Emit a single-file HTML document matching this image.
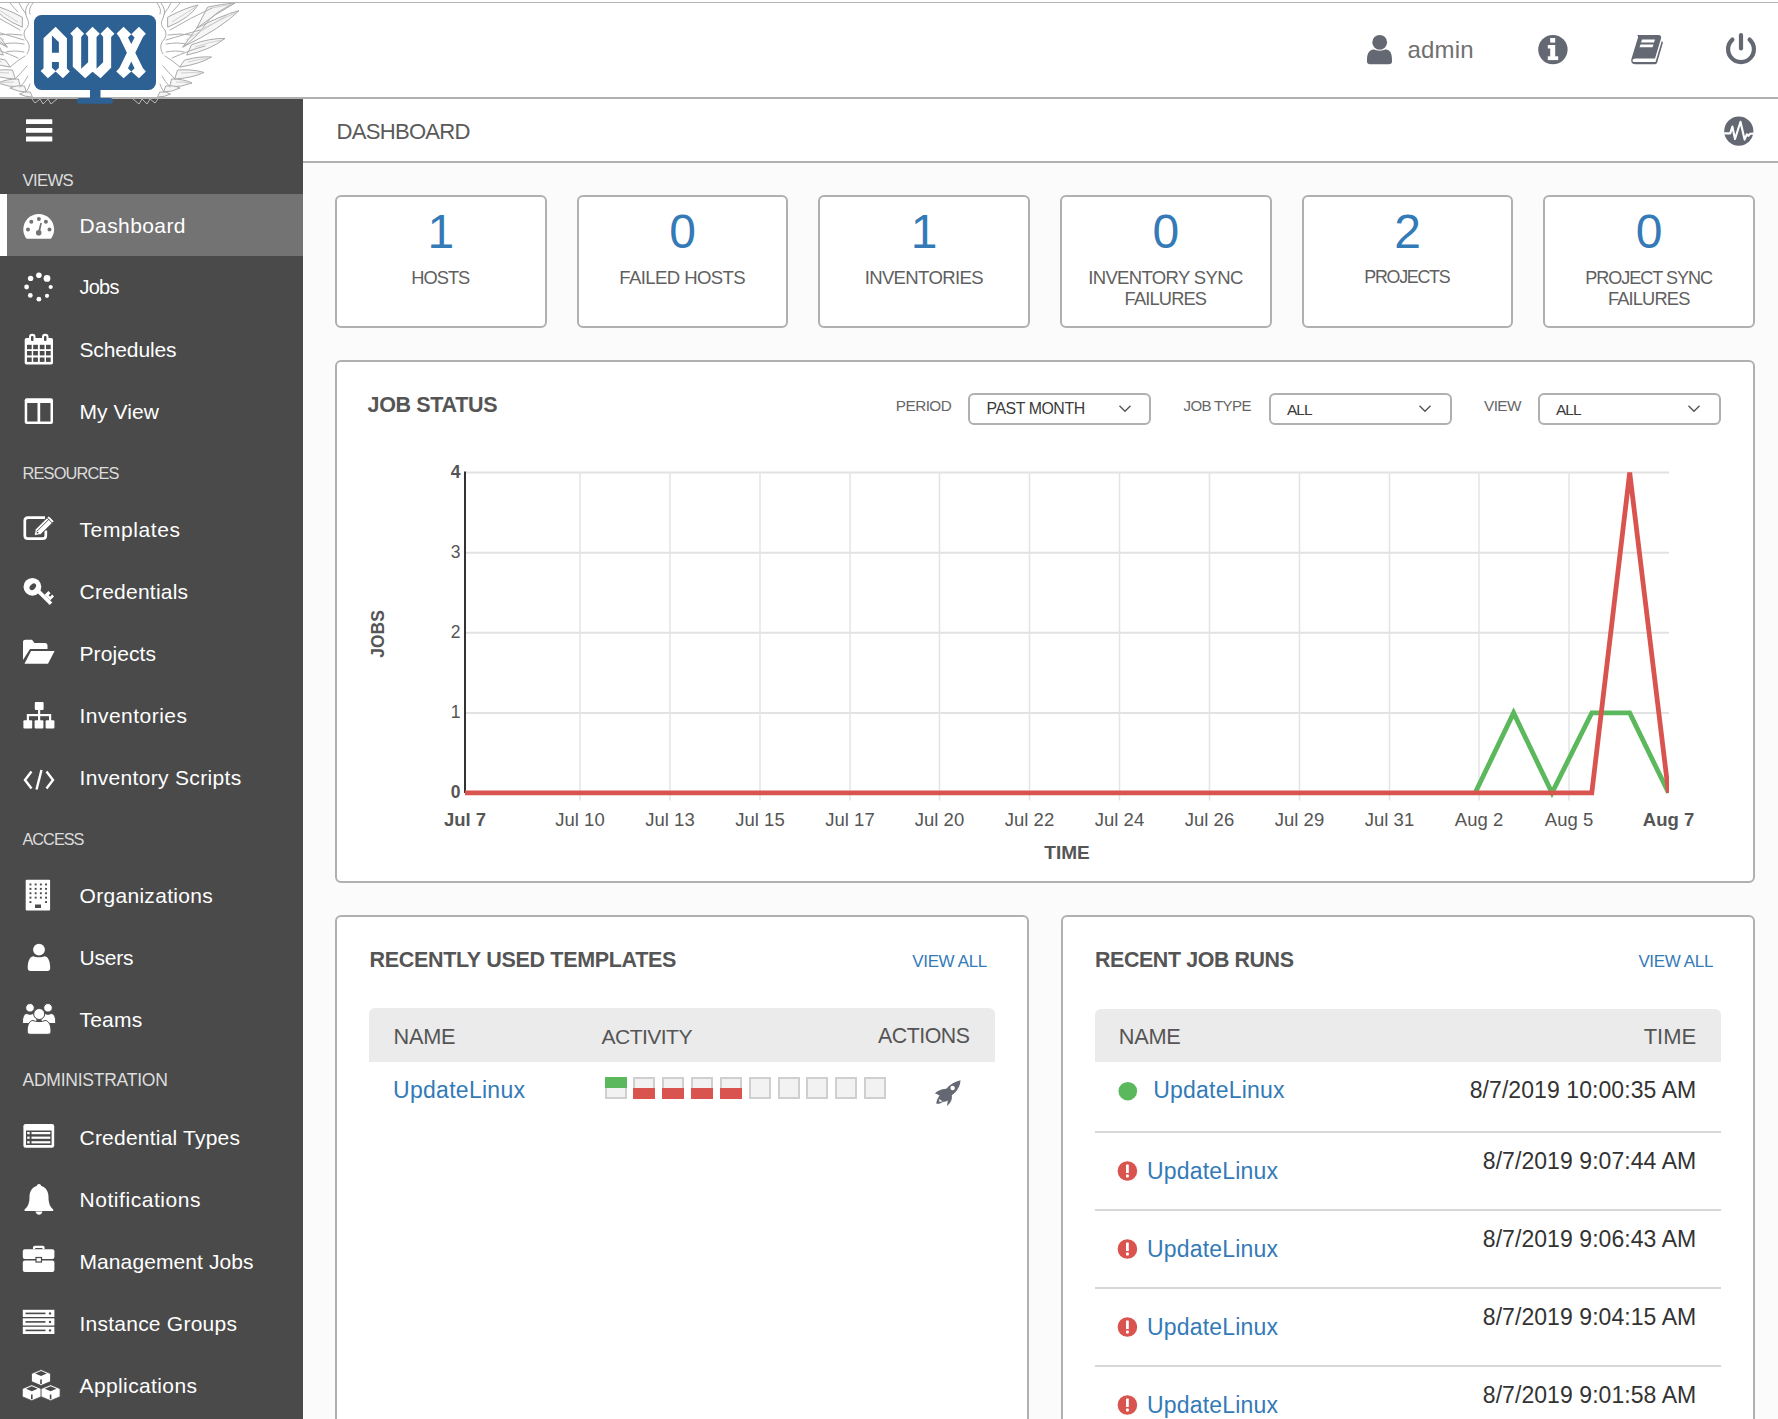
<!DOCTYPE html>
<html><head><meta charset="utf-8"><title>AWX Dashboard</title>
<style>
html,body{margin:0;padding:0;width:1778px;height:1419px;overflow:hidden;background:#fff;}
body{position:relative;font-family:"Liberation Sans",sans-serif;}
.t{position:absolute;white-space:nowrap;line-height:1;}
svg{display:block;}
</style></head><body>
<div style="position:absolute;left:0px;top:0px;width:1778px;height:1419px;background:#fff;"></div>
<div style="position:absolute;left:303px;top:163px;width:1475px;height:1256px;background:#fbfbfb;"></div>
<div style="position:absolute;left:0px;top:2px;width:1778px;height:1px;background:#b4b4b4;"></div>
<div style="position:absolute;left:0px;top:97px;width:1778px;height:2px;background:#b0b0b0;"></div>
<div style="position:absolute;left:303px;top:161px;width:1475px;height:2px;background:#b0b0b0;"></div>
<div style="position:absolute;left:0px;top:99px;width:303px;height:1320px;background:#4a4a4a;"></div>
<div style="position:absolute;left:7px;top:194px;width:296px;height:62px;background:#737373;"></div>
<div style="position:absolute;left:0px;top:194px;width:7px;height:62px;background:#fff;"></div>
<svg style="position:absolute;left:0;top:0" width="260" height="110" viewBox="0 0 260 110">
<clipPath id="wc"><rect x="0" y="3" width="260" height="107"/></clipPath><rect x="0" y="99" width="260" height="11" fill="#4a4a4a"/>
<g clip-path="url(#wc)">

<g fill="#f6f6f6" stroke="#a9a9a9" stroke-width="1" stroke-linecap="round" stroke-linejoin="round">
<path d="M197,28 Q220,16 239,10.6 Q222,28 183,47 Z"/>
<path d="M208,7 Q222,4 235,3 Q215,14 197,28 Z"/>
<path d="M168,17 Q185,8 198,5 Q190,18 168,27 Z"/>
<path d="M192,44.5 Q210,38 225,38.5 Q210,50 187,55 Z"/>
<path d="M185,60 Q200,56 211.6,57 Q200,64 180,67 Z"/>
<path d="M178,70 Q193,69 204,72.5 Q192,78 175,79 Z"/>
<path d="M172,79 Q184,79 192,83 Q182,87 170,87 Z"/>
<path d="M166,86 Q174,85 180,88 Q172,92 164,92 Z"/>
<path d="M160,92 Q166,91 170.5,94 Q165,97 158,97 Z"/>
</g>
<g fill="none" stroke="#adadad" stroke-width="1" stroke-linecap="round">
<path d="M183,47 Q198,36 205,25 Q214,12 235,3"/>
<path d="M168,35 Q180,33 192,35 M166,44 Q178,42 186,44 M166,52 Q176,50 184,52"/>
<path d="M161,3 Q167,10 163,18 Q159,25 165,30 Q168,36 162,42 Q159,48 163,54"/>
<path d="M157,3 Q162,9 160,14 M171,3 Q168,9 164,14 M180,3 Q176,8 172,12"/>
<path d="M180,67 Q172,60 165,56 M175,79 Q168,72 163,66 M170,87 Q165,82 162,76 M164,92 Q161,88 160,84"/>
<path d="M170,30 Q190,18 212,8 M166,40 Q186,34 200,30 M172,58 Q190,50 205,46"/>
<path d="M133,99 L139,104 L142,99 L147,104 L150,99 L155,103 L158,99" stroke="#b9b9b9"/>
</g>
<g fill="none" stroke="#c9c9c9" stroke-width="0.9">
<path d="M200,30 Q220,20 236,12.5"/>
<path d="M172,22 Q188,12 197,6"/>
<path d="M195,47 Q210,42 222,40"/>
<path d="M188,62 Q200,59 209,58"/>
<path d="M181,73 Q193,72 201,73"/>
<path d="M176,82 Q185,82 190,83"/>
<path d="M186,40 Q210,26 232,12"/>
<path d="M212,8 Q222,6 232,4"/>
</g>
<g transform="translate(190,0) scale(-1,1)">
<g fill="#f6f6f6" stroke="#a9a9a9" stroke-width="1" stroke-linecap="round" stroke-linejoin="round">
<path d="M197,28 Q220,16 239,10.6 Q222,28 183,47 Z"/>
<path d="M208,7 Q222,4 235,3 Q215,14 197,28 Z"/>
<path d="M168,17 Q185,8 198,5 Q190,18 168,27 Z"/>
<path d="M192,44.5 Q210,38 225,38.5 Q210,50 187,55 Z"/>
<path d="M185,60 Q200,56 211.6,57 Q200,64 180,67 Z"/>
<path d="M178,70 Q193,69 204,72.5 Q192,78 175,79 Z"/>
<path d="M172,79 Q184,79 192,83 Q182,87 170,87 Z"/>
<path d="M166,86 Q174,85 180,88 Q172,92 164,92 Z"/>
<path d="M160,92 Q166,91 170.5,94 Q165,97 158,97 Z"/>
</g>
<g fill="none" stroke="#adadad" stroke-width="1" stroke-linecap="round">
<path d="M183,47 Q198,36 205,25 Q214,12 235,3"/>
<path d="M168,35 Q180,33 192,35 M166,44 Q178,42 186,44 M166,52 Q176,50 184,52"/>
<path d="M161,3 Q167,10 163,18 Q159,25 165,30 Q168,36 162,42 Q159,48 163,54"/>
<path d="M157,3 Q162,9 160,14 M171,3 Q168,9 164,14 M180,3 Q176,8 172,12"/>
<path d="M180,67 Q172,60 165,56 M175,79 Q168,72 163,66 M170,87 Q165,82 162,76 M164,92 Q161,88 160,84"/>
<path d="M170,30 Q190,18 212,8 M166,40 Q186,34 200,30 M172,58 Q190,50 205,46"/>
<path d="M133,99 L139,104 L142,99 L147,104 L150,99 L155,103 L158,99" stroke="#b9b9b9"/>
</g>
<g fill="none" stroke="#c9c9c9" stroke-width="0.9">
<path d="M200,30 Q220,20 236,12.5"/>
<path d="M172,22 Q188,12 197,6"/>
<path d="M195,47 Q210,42 222,40"/>
<path d="M188,62 Q200,59 209,58"/>
<path d="M181,73 Q193,72 201,73"/>
<path d="M176,82 Q185,82 190,83"/>
<path d="M186,40 Q210,26 232,12"/>
<path d="M212,8 Q222,6 232,4"/>
</g></g>
</g>
<rect x="34" y="15" width="122" height="75" rx="7.5" fill="#2d6093"/>
<rect x="90" y="88" width="10.5" height="12" fill="#2d6093"/>
<rect x="77" y="98" width="36" height="5.8" rx="2.9" fill="#2d6093"/>
<g transform="translate(30,10) scale(0.07312)" fill="#fff" fill-rule="evenodd">
<path d="M185,385 L350,230 L505,385 L505,800 L545,840 L450,935 L350,840 L245,935 L145,835 L185,795 Z M300,350 L395,440 L395,585 L300,585 Z M300,710 L395,710 L395,790 L350,835 L300,790 Z"/>
<path d="M550,320 L645,230 L740,325 L700,368 L700,805 L795,715 L795,365 L760,325 L855,230 L955,325 L910,368 L910,805 L1000,715 L1000,365 L965,325 L1060,230 L1155,325 L1110,370 L1110,790 L965,935 L855,845 L755,935 L585,775 L585,360 Z"/>
<path d="M1185,320 L1280,230 L1385,330 L1490,230 L1585,325 L1545,370 L1440,585 L1545,795 L1585,840 L1490,935 L1385,840 L1280,935 L1180,840 L1225,790 L1325,585 L1225,375 Z M1340,375 L1385,330 L1430,375 L1385,465 Z M1340,795 L1385,705 L1430,795 L1385,840 Z"/>
</g>
</svg>
<svg style="position:absolute;left:0;top:0" width="1778" height="170" viewBox="0 0 1778 170">
<g fill="#646873">
<circle cx="1379.7" cy="42.3" r="7.4"/>
<path d="M1367,60 C1367,52 1370,49.5 1374.5,49.5 C1376.5,51 1383,51 1385,49.5 C1389.5,49.5 1392,52 1392,60 L1392,61.5 C1392,63.2 1390.8,64.2 1389,64.2 L1370,64.2 C1368.2,64.2 1367,63.2 1367,61.5 Z"/>
<circle cx="1552.9" cy="49.6" r="14.7"/>
<path d="M1636.5,35 L1658.5,35 C1660.7,35 1661.5,36.5 1661,38.5 L1655,58.5 L1636,58.5 C1633.2,58.5 1632.5,59.5 1632.5,60.5 C1632.5,62 1633.5,62 1635,62 L1655.5,62 L1661.8,41 L1663,42.5 L1657,63 C1656.5,64 1655.5,64.2 1654.5,64.2 L1635,64.2 C1632,64.2 1630.8,62 1631.4,59 L1638,37.5 C1638.5,35.8 1637,35 1636.5,35 Z"/>
<circle cx="1738.8" cy="131.1" r="14.6"/>
</g>
<g fill="#fff">
<rect x="1550.2" y="38" width="5" height="4.6"/>
<rect x="1550.2" y="45" width="5" height="12"/>
<rect x="1547.8" y="45" width="4" height="3.5"/>
<rect x="1547.8" y="56.3" width="10.4" height="3.8"/>
<path d="M1642,39.5 L1655,39.5 L1654,42.5 L1641,42.5 Z M1640.5,44.5 L1653.5,44.5 L1652.5,47.2 L1639.5,47.2 Z"/>
</g>
<g fill="none" stroke="#646873" stroke-width="4.2" stroke-linecap="round">
<path d="M1732.4,39.6 A12.9,12.9 0 1 0 1749.6,39.6"/>
<line x1="1741" y1="35" x2="1741" y2="48.5"/>
</g>
<clipPath id="pc"><circle cx="1738.8" cy="131.1" r="14.8"/></clipPath><polyline clip-path="url(#pc)" points="1722,133.4 1730.2,133.4 1732.4,126.6 1735,139 1740.5,121.8 1744.6,139.6 1746.8,134.3 1748.5,135.8 1750.2,133.8 1756,133.6" fill="none" stroke="#fff" stroke-width="2.1" stroke-linejoin="round"/>
</svg>
<div class="t" style="left:1407.50px;top:38.48px;font-size:24px;color:#707070;letter-spacing:0.159px;">admin</div>
<svg style="position:absolute;left:0;top:0" width="303" height="1419" viewBox="0 0 303 1419">
<g fill="#fff">
<rect x="26" y="119.2" width="26.3" height="4.9" rx="0.5"/>
<rect x="26" y="127.9" width="26.3" height="4.9" rx="0.5"/>
<rect x="26" y="136.5" width="26.3" height="4.9" rx="0.5"/>
</g>
</svg>
<svg style="position:absolute;left:0;top:0" width="303" height="1419" viewBox="0 0 303 1419"><clipPath id="gclip"><rect x="20" y="210" width="40" height="28.8"/></clipPath>
<circle cx="38.7" cy="229.3" r="15.4" fill="#fff" clip-path="url(#gclip)"/>
<g fill="#737373"><circle cx="28" cy="229.4" r="2"/><circle cx="31.3" cy="221.8" r="2"/><circle cx="38.9" cy="218.9" r="2"/><circle cx="45.9" cy="221.8" r="2"/><circle cx="49.5" cy="229.4" r="2"/>
<circle cx="38.7" cy="232.7" r="2.8"/><path d="M37.8,232.4 L40.4,222.7 L41.9,223.1 L39.8,232.9 Z"/></g><g fill="#fff"><circle cx="38.9" cy="275.2" r="2.8"/><circle cx="47" cy="278.4" r="3.4"/><circle cx="50.7" cy="287" r="2.1"/><circle cx="47" cy="295.8" r="2.1"/><circle cx="38.9" cy="299.2" r="2.4"/><circle cx="30.3" cy="295.4" r="2.4"/><circle cx="26.6" cy="287" r="2.4"/><circle cx="30.6" cy="278.4" r="2.7"/></g><rect x="24.7" y="338" width="28.3" height="26.6" rx="1.8" fill="#fff"/>
<rect x="29" y="333.8" width="6.5" height="8" rx="3" fill="#fff"/><rect x="42" y="333.8" width="6.5" height="8" rx="3" fill="#fff"/>
<rect x="31" y="336" width="2.5" height="5" rx="1" fill="#4a4a4a"/><rect x="44" y="336" width="2.5" height="5" rx="1" fill="#4a4a4a"/>
<g fill="#4a4a4a"><rect x="27" y="344.8" width="4.7" height="4.4"/><rect x="33.2" y="344.8" width="4.7" height="4.4"/><rect x="39.8" y="344.8" width="4.7" height="4.4"/><rect x="46" y="344.8" width="4.7" height="4.4"/><rect x="27" y="351" width="4.7" height="4.4"/><rect x="33.2" y="351" width="4.7" height="4.4"/><rect x="39.8" y="351" width="4.7" height="4.4"/><rect x="46" y="351" width="4.7" height="4.4"/><rect x="27" y="357.5" width="4.7" height="4.4"/><rect x="33.2" y="357.5" width="4.7" height="4.4"/><rect x="39.8" y="357.5" width="4.7" height="4.4"/><rect x="46" y="357.5" width="4.7" height="4.4"/></g><rect x="24.7" y="398.3" width="28.3" height="25.6" rx="2" fill="#fff"/><rect x="27.2" y="403" width="10.3" height="18.5" fill="#4a4a4a"/><rect x="40.2" y="403" width="10.3" height="18.5" fill="#4a4a4a"/><path d="M45,517.6 L28,517.6 C25.8,517.6 24.8,518.6 24.8,520.8 L24.8,535.4 C24.8,537.6 25.8,538.6 28,538.6 L42.6,538.6 C44.8,538.6 45.8,537.6 45.8,535.4 L45.8,530.5" fill="none" stroke="#fff" stroke-width="2.7"/>
<path d="M34.2,535.6 L35.4,529.3 L48.8,515.9 L54.1,521.2 L40.7,534.6 Z" fill="#fff" stroke="#4a4a4a" stroke-width="0.9"/>
<path d="M36.8,531.4 L49.2,519 M47,517.7 L52.3,523" fill="none" stroke="#4a4a4a" stroke-width="0.9"/>
<circle cx="37.6" cy="532.6" r="0.9" fill="#4a4a4a"/><circle cx="32.4" cy="586.8" r="8.9" fill="#fff"/><ellipse cx="32.8" cy="586.8" rx="3.8" ry="2.6" transform="rotate(-45 32.8 586.8)" fill="#4a4a4a"/>
<path d="M38.4,588.6 L52.3,602.5 L49.7,605.1 L35.8,591.2 Z" fill="#fff"/>
<path d="M44.6,594.8 L48.4,591 L50.6,593.2 L48.6,595.2 L50.1,596.7 L52.2,594.6 L54,596.4 L50.2,600.2 Z" fill="#fff"/><path d="M23,660 L23,642 C23,640.5 24,639.7 25.5,639.7 L32,639.7 L34.5,643 L45,643 C46.5,643 47.5,644 47.5,645.5 L47.5,649 L30,649 L23,660 Z" fill="#fff"/>
<path d="M24.5,663.8 L31,651 L54.6,651 L48,663.8 Z" fill="#fff"/><g fill="#fff"><rect x="34.8" y="702" width="8.8" height="8" rx="1"/><rect x="23.4" y="720.3" width="8.8" height="8.3" rx="1"/><rect x="34.6" y="720.3" width="8.8" height="8.3" rx="1"/><rect x="45.6" y="720.3" width="8.8" height="8.3" rx="1"/>
<rect x="38" y="709" width="2.2" height="12"/><rect x="27" y="714" width="24" height="2.2"/><rect x="26.8" y="714" width="2.2" height="7"/><rect x="49" y="714" width="2.2" height="7"/></g><g fill="none" stroke="#fff" stroke-width="2.4" stroke-linecap="butt"><polyline points="31.5,771.5 25,780 31.5,788.5"/><polyline points="46.5,771.5 53,780 46.5,788.5"/><line x1="41.5" y1="770" x2="36.5" y2="789.5"/></g><rect x="25.7" y="879.8" width="24.4" height="30.6" rx="1" fill="#fff"/>
<g fill="#4a4a4a"><rect x="29.5" y="883.5" width="1.9" height="1.9"/><rect x="34.7" y="883.5" width="1.9" height="1.9"/><rect x="39.9" y="883.5" width="1.9" height="1.9"/><rect x="45.1" y="883.5" width="1.9" height="1.9"/><rect x="29.5" y="887.9" width="1.9" height="1.9"/><rect x="34.7" y="887.9" width="1.9" height="1.9"/><rect x="39.9" y="887.9" width="1.9" height="1.9"/><rect x="45.1" y="887.9" width="1.9" height="1.9"/><rect x="29.5" y="892.3" width="1.9" height="1.9"/><rect x="34.7" y="892.3" width="1.9" height="1.9"/><rect x="39.9" y="892.3" width="1.9" height="1.9"/><rect x="45.1" y="892.3" width="1.9" height="1.9"/><rect x="29.5" y="896.7" width="1.9" height="1.9"/><rect x="34.7" y="896.7" width="1.9" height="1.9"/><rect x="39.9" y="896.7" width="1.9" height="1.9"/><rect x="45.1" y="896.7" width="1.9" height="1.9"/><rect x="29.5" y="901.1" width="1.9" height="1.9"/><rect x="45.1" y="901.1" width="1.9" height="1.9"/><rect x="35" y="904.5" width="6" height="3.5"/></g><g fill="#fff"><circle cx="39" cy="949.6" r="5.9"/><path d="M27.7,968 C27.7,960 30.5,956.2 33.5,956.2 C36,957.5 42,957.5 44.5,956.2 C47.5,956.2 50.2,960 50.2,968 C50.2,970 49.2,971 47.5,971 L30.5,971 C28.7,971 27.7,970 27.7,968 Z"/></g><g fill="#fff" stroke="#4a4a4a" stroke-width="1">
<circle cx="30" cy="1007.8" r="4.3"/><circle cx="48" cy="1007.8" r="4.3"/>
<path d="M22.5,1022 C22.5,1016 24.5,1013.5 27,1013.5 C28.5,1014.5 31.5,1014.5 33,1013.5 C35.5,1013.5 37,1016 37,1022 L37,1023.5 L22.5,1023.5 Z"/>
<path d="M41,1022 C41,1016 42.5,1013.5 45,1013.5 C46.5,1014.5 49.5,1014.5 51,1013.5 C53.5,1013.5 55.7,1016 55.7,1022 L55.7,1023.5 L41,1023.5 Z"/>
<circle cx="39.2" cy="1014" r="5.5"/>
<path d="M27.2,1031 C27.2,1024 30,1020.5 33,1020.5 C35.5,1022 42.5,1022 45,1020.5 C48,1020.5 51,1024 51,1031 C51,1033 50,1034.3 48,1034.3 L30,1034.3 C28.2,1034.3 27.2,1033 27.2,1031 Z"/>
</g><rect x="23.4" y="1124" width="30.8" height="23.8" rx="2.2" fill="#fff"/>
<rect x="26" y="1130.5" width="25.6" height="14.5" fill="#4a4a4a"/>
<g fill="#fff"><rect x="27.2" y="1132" width="2.5" height="2.2"/><rect x="31.5" y="1132" width="18.8" height="2.2"/>
<rect x="27.2" y="1136.6" width="2.5" height="2.2"/><rect x="31.5" y="1136.6" width="18.8" height="2.2"/>
<rect x="27.2" y="1141.2" width="2.5" height="2.2"/><rect x="31.5" y="1141.2" width="18.8" height="2.2"/></g><g fill="#fff"><path d="M39,1184 C40.5,1184 41.2,1185 41.2,1186 C46,1187.3 48.5,1191.5 48.5,1197 C48.5,1204 50.5,1207 53.2,1209.3 L53.2,1211 L24.6,1211 L24.6,1209.3 C27.5,1207 29.5,1204 29.5,1197 C29.5,1191.5 32,1187.3 36.8,1186 C36.8,1185 37.5,1184 39,1184 Z"/><path d="M35.5,1211.5 C35.8,1213.5 37.2,1214.7 39,1214.7 C40.8,1214.7 42.2,1213.5 42.5,1211.5 Z"/></g><g fill="#fff"><path d="M33,1249 L33,1247.5 C33,1246.5 33.8,1245.8 34.8,1245.8 L42.8,1245.8 C43.8,1245.8 44.6,1246.5 44.6,1247.5 L44.6,1249 L42.4,1249 L42.4,1248 L35.2,1248 L35.2,1249 Z"/>
<rect x="22.8" y="1249.3" width="31.6" height="9.8" rx="2"/><rect x="22.8" y="1260.6" width="31.6" height="11.4" rx="2"/></g>
<rect x="36" y="1257.5" width="5.5" height="4.5" fill="#fff" stroke="#4a4a4a" stroke-width="1.2"/><g fill="#fff"><rect x="22.8" y="1309.8" width="31.6" height="7.2"/><rect x="22.8" y="1318.3" width="31.6" height="7.2"/><rect x="22.8" y="1326.8" width="31.6" height="7.2"/></g>
<g fill="#4a4a4a"><rect x="25.5" y="1312.6" width="20" height="1.6"/><rect x="25.5" y="1321.1" width="20" height="1.6"/><rect x="25.5" y="1329.6" width="20" height="1.6"/>
<circle cx="50" cy="1313.4" r="1.2"/><circle cx="50" cy="1321.9" r="1.2"/><circle cx="50" cy="1330.4" r="1.2"/></g><polygon points="41.00,1369.60 50.50,1373.60 50.50,1381.60 41.00,1385.60 31.50,1381.60 31.50,1373.60" fill="#fff" stroke="#4a4a4a" stroke-width="0.8"/><polygon points="41.00,1371.12 46.89,1373.60 41.00,1376.08 35.11,1373.60" fill="#4a4a4a"/><rect x="40.20" y="1379.40" width="1.6" height="4.70" fill="#4a4a4a"/><polygon points="31.80,1384.70 41.30,1388.70 41.30,1396.70 31.80,1400.70 22.30,1396.70 22.30,1388.70" fill="#fff" stroke="#4a4a4a" stroke-width="0.8"/><polygon points="31.80,1386.22 37.69,1388.70 31.80,1391.18 25.91,1388.70" fill="#4a4a4a"/><rect x="31.00" y="1394.50" width="1.6" height="4.70" fill="#4a4a4a"/><polygon points="50.60,1384.70 60.10,1388.70 60.10,1396.70 50.60,1400.70 41.10,1396.70 41.10,1388.70" fill="#fff" stroke="#4a4a4a" stroke-width="0.8"/><polygon points="50.60,1386.22 56.49,1388.70 50.60,1391.18 44.71,1388.70" fill="#4a4a4a"/><rect x="49.80" y="1394.50" width="1.6" height="4.70" fill="#4a4a4a"/></svg>
<div class="t" style="left:79.50px;top:215.22px;font-size:21px;color:#fff;letter-spacing:0.409px;">Dashboard</div>
<div class="t" style="left:79.50px;top:278.10px;font-size:19.97px;color:#fff;letter-spacing:-0.727px;">Jobs</div>
<div class="t" style="left:79.50px;top:339.22px;font-size:21px;color:#fff;letter-spacing:-0.133px;">Schedules</div>
<div class="t" style="left:79.50px;top:401.22px;font-size:21px;color:#fff;letter-spacing:0.056px;">My View</div>
<div class="t" style="left:79.50px;top:519.22px;font-size:21px;color:#fff;letter-spacing:0.599px;">Templates</div>
<div class="t" style="left:79.50px;top:581.22px;font-size:21px;color:#fff;letter-spacing:0.239px;">Credentials</div>
<div class="t" style="left:79.50px;top:643.22px;font-size:21px;color:#fff;letter-spacing:0.092px;">Projects</div>
<div class="t" style="left:79.50px;top:705.22px;font-size:21px;color:#fff;letter-spacing:0.478px;">Inventories</div>
<div class="t" style="left:79.50px;top:767.22px;font-size:21px;color:#fff;letter-spacing:0.332px;">Inventory Scripts</div>
<div class="t" style="left:79.50px;top:885.22px;font-size:21px;color:#fff;letter-spacing:0.303px;">Organizations</div>
<div class="t" style="left:79.50px;top:947.22px;font-size:21px;color:#fff;letter-spacing:-0.209px;">Users</div>
<div class="t" style="left:79.50px;top:1009.22px;font-size:21px;color:#fff;letter-spacing:0.213px;">Teams</div>
<div class="t" style="left:79.50px;top:1127.22px;font-size:21px;color:#fff;letter-spacing:0.221px;">Credential Types</div>
<div class="t" style="left:79.50px;top:1189.22px;font-size:21px;color:#fff;letter-spacing:0.552px;">Notifications</div>
<div class="t" style="left:79.50px;top:1251.22px;font-size:21px;color:#fff;letter-spacing:0.089px;">Management Jobs</div>
<div class="t" style="left:79.50px;top:1313.22px;font-size:21px;color:#fff;letter-spacing:0.238px;">Instance Groups</div>
<div class="t" style="left:79.50px;top:1375.22px;font-size:21px;color:#fff;letter-spacing:0.388px;">Applications</div>
<div class="t" style="left:22.50px;top:172.85px;font-size:16.71px;color:#dddddd;letter-spacing:-0.638px;">VIEWS</div>
<div class="t" style="left:22.50px;top:465.11px;font-size:16.41px;color:#dddddd;letter-spacing:-0.869px;">RESOURCES</div>
<div class="t" style="left:22.50px;top:831.21px;font-size:16.29px;color:#dddddd;letter-spacing:-0.999px;">ACCESS</div>
<div class="t" style="left:22.50px;top:1072.19px;font-size:17.5px;color:#dddddd;letter-spacing:-0.240px;">ADMINISTRATION</div>
<div class="t" style="left:336.50px;top:121.31px;font-size:22.08px;color:#5a5a5a;letter-spacing:-0.734px;">DASHBOARD</div>
<div style="position:absolute;left:335.0px;top:195px;width:211.67px;height:133px;box-sizing:border-box;border:2px solid #b0b0b0;border-radius:6px;background:#fff;"></div>
<div class="t" style="left:427.48px;top:207.77px;font-size:48px;color:#337ab7;">1</div>
<div class="t" style="left:411.33px;top:269.00px;font-size:18.31px;color:#606060;letter-spacing:-1.019px;">HOSTS</div>
<div style="position:absolute;left:576.67px;top:195px;width:211.67px;height:133px;box-sizing:border-box;border:2px solid #b0b0b0;border-radius:6px;background:#fff;"></div>
<div class="t" style="left:669.15px;top:207.77px;font-size:48px;color:#337ab7;">0</div>
<div class="t" style="left:619.30px;top:268.78px;font-size:18.57px;color:#606060;letter-spacing:-0.611px;">FAILED HOSTS</div>
<div style="position:absolute;left:818.33px;top:195px;width:211.67px;height:133px;box-sizing:border-box;border:2px solid #b0b0b0;border-radius:6px;background:#fff;"></div>
<div class="t" style="left:910.82px;top:207.77px;font-size:48px;color:#337ab7;">1</div>
<div class="t" style="left:864.66px;top:268.80px;font-size:18.55px;color:#606060;letter-spacing:-0.641px;">INVENTORIES</div>
<div style="position:absolute;left:1060.0px;top:195px;width:211.67px;height:133px;box-sizing:border-box;border:2px solid #b0b0b0;border-radius:6px;background:#fff;"></div>
<div class="t" style="left:1152.48px;top:207.77px;font-size:48px;color:#337ab7;">0</div>
<div class="t" style="left:1088.23px;top:268.81px;font-size:18.53px;color:#606060;letter-spacing:-0.656px;">INVENTORY SYNC</div>
<div class="t" style="left:1124.58px;top:290.43px;font-size:18.28px;color:#606060;letter-spacing:-0.841px;">FAILURES</div>
<div style="position:absolute;left:1301.67px;top:195px;width:211.67px;height:133px;box-sizing:border-box;border:2px solid #b0b0b0;border-radius:6px;background:#fff;"></div>
<div class="t" style="left:1394.15px;top:207.77px;font-size:48px;color:#337ab7;">2</div>
<div class="t" style="left:1364.35px;top:269.40px;font-size:17.84px;color:#606060;letter-spacing:-1.266px;">PROJECTS</div>
<div style="position:absolute;left:1543.34px;top:195px;width:211.67px;height:133px;box-sizing:border-box;border:2px solid #b0b0b0;border-radius:6px;background:#fff;"></div>
<div class="t" style="left:1635.82px;top:207.77px;font-size:48px;color:#337ab7;">0</div>
<div class="t" style="left:1585.16px;top:269.21px;font-size:18.06px;color:#606060;letter-spacing:-1.014px;">PROJECT SYNC</div>
<div class="t" style="left:1607.91px;top:290.43px;font-size:18.28px;color:#606060;letter-spacing:-0.841px;">FAILURES</div>
<div style="position:absolute;left:335px;top:360px;width:1420px;height:523px;box-sizing:border-box;border:2px solid #b0b0b0;border-radius:6px;background:#fff;"></div>
<div class="t" style="left:367.50px;top:394.70px;font-size:21.5px;color:#555;letter-spacing:-0.332px;font-weight:bold;">JOB STATUS</div>
<div class="t" style="left:895.80px;top:398.25px;font-size:15.3px;color:#666;letter-spacing:-0.532px;">PERIOD</div>
<div style="position:absolute;left:968px;top:393px;width:183px;height:31.5px;box-sizing:border-box;border:2px solid #b0b0b0;border-radius:6px;background:#fff;"></div>
<div class="t" style="left:986.50px;top:401.35px;font-size:15.89px;color:#3a3a3a;letter-spacing:-0.445px;">PAST MONTH</div>
<svg style="position:absolute;left:1117.5px;top:403px" width="14" height="11" viewBox="0 0 14 11"><polyline points="1.5,2.8 7,8.3 12.5,2.8" fill="none" stroke="#555" stroke-width="1.4"/></svg>
<div class="t" style="left:1183.50px;top:398.45px;font-size:15.06px;color:#666;letter-spacing:-0.648px;">JOB TYPE</div>
<div style="position:absolute;left:1268.5px;top:393px;width:183px;height:31.5px;box-sizing:border-box;border:2px solid #b0b0b0;border-radius:6px;background:#fff;"></div>
<div class="t" style="left:1287.00px;top:401.73px;font-size:15.44px;color:#3a3a3a;letter-spacing:-0.936px;">ALL</div>
<svg style="position:absolute;left:1418.0px;top:403px" width="14" height="11" viewBox="0 0 14 11"><polyline points="1.5,2.8 7,8.3 12.5,2.8" fill="none" stroke="#555" stroke-width="1.4"/></svg>
<div class="t" style="left:1484.00px;top:398.21px;font-size:15.34px;color:#666;letter-spacing:-0.569px;">VIEW</div>
<div style="position:absolute;left:1537.5px;top:393px;width:183px;height:31.5px;box-sizing:border-box;border:2px solid #b0b0b0;border-radius:6px;background:#fff;"></div>
<div class="t" style="left:1556.00px;top:401.73px;font-size:15.44px;color:#3a3a3a;letter-spacing:-0.936px;">ALL</div>
<svg style="position:absolute;left:1687.0px;top:403px" width="14" height="11" viewBox="0 0 14 11"><polyline points="1.5,2.8 7,8.3 12.5,2.8" fill="none" stroke="#555" stroke-width="1.4"/></svg>
<svg style="position:absolute;left:0;top:0" width="1778" height="900" viewBox="0 0 1778 900"><line x1="465" y1="472.6" x2="1669" y2="472.6" stroke="#e2e2e2" stroke-width="2"/><line x1="465" y1="552.7" x2="1669" y2="552.7" stroke="#e2e2e2" stroke-width="2"/><line x1="465" y1="632.8" x2="1669" y2="632.8" stroke="#e2e2e2" stroke-width="2"/><line x1="465" y1="712.9" x2="1669" y2="712.9" stroke="#e2e2e2" stroke-width="2"/><line x1="580" y1="472" x2="580" y2="800.5" stroke="#e4e4e4" stroke-width="1.5"/><line x1="670" y1="472" x2="670" y2="800.5" stroke="#e4e4e4" stroke-width="1.5"/><line x1="760" y1="472" x2="760" y2="800.5" stroke="#e4e4e4" stroke-width="1.5"/><line x1="850" y1="472" x2="850" y2="800.5" stroke="#e4e4e4" stroke-width="1.5"/><line x1="939.5" y1="472" x2="939.5" y2="800.5" stroke="#e4e4e4" stroke-width="1.5"/><line x1="1029.5" y1="472" x2="1029.5" y2="800.5" stroke="#e4e4e4" stroke-width="1.5"/><line x1="1119.5" y1="472" x2="1119.5" y2="800.5" stroke="#e4e4e4" stroke-width="1.5"/><line x1="1209.5" y1="472" x2="1209.5" y2="800.5" stroke="#e4e4e4" stroke-width="1.5"/><line x1="1299.5" y1="472" x2="1299.5" y2="800.5" stroke="#e4e4e4" stroke-width="1.5"/><line x1="1389.5" y1="472" x2="1389.5" y2="800.5" stroke="#e4e4e4" stroke-width="1.5"/><line x1="1479" y1="472" x2="1479" y2="800.5" stroke="#e4e4e4" stroke-width="1.5"/><line x1="1569" y1="472" x2="1569" y2="800.5" stroke="#e4e4e4" stroke-width="1.5"/><line x1="465" y1="471.5" x2="465" y2="793" stroke="#333" stroke-width="2"/><clipPath id="cc"><rect x="465" y="460" width="1204" height="340"/></clipPath><g clip-path="url(#cc)" fill="none" stroke-width="4.8" stroke-linejoin="miter"><polyline points="1475.2,792.8 1513.6,712.9 1552,792.8 1591.8,712.9 1629.7,712.9 1668.5,792.8" stroke="#5cb85c"/><polyline points="465,792.8 1591.8,792.8 1629.7,472.6 1668.5,792.8" stroke="#d9534f"/></g></svg>
<div class="t" style="left:443.92px;top:810.64px;font-size:18.5px;color:#555;font-weight:bold;">Jul 7</div>
<div class="t" style="left:555.32px;top:810.64px;font-size:18.5px;color:#555;">Jul 10</div>
<div class="t" style="left:645.32px;top:810.64px;font-size:18.5px;color:#555;">Jul 13</div>
<div class="t" style="left:735.32px;top:810.64px;font-size:18.5px;color:#555;">Jul 15</div>
<div class="t" style="left:825.32px;top:810.64px;font-size:18.5px;color:#555;">Jul 17</div>
<div class="t" style="left:914.82px;top:810.64px;font-size:18.5px;color:#555;">Jul 20</div>
<div class="t" style="left:1004.82px;top:810.64px;font-size:18.5px;color:#555;">Jul 22</div>
<div class="t" style="left:1094.82px;top:810.64px;font-size:18.5px;color:#555;">Jul 24</div>
<div class="t" style="left:1184.82px;top:810.64px;font-size:18.5px;color:#555;">Jul 26</div>
<div class="t" style="left:1274.82px;top:810.64px;font-size:18.5px;color:#555;">Jul 29</div>
<div class="t" style="left:1364.82px;top:810.64px;font-size:18.5px;color:#555;">Jul 31</div>
<div class="t" style="left:1454.83px;top:810.64px;font-size:18.5px;color:#555;">Aug 2</div>
<div class="t" style="left:1544.83px;top:810.64px;font-size:18.5px;color:#555;">Aug 5</div>
<div class="t" style="left:1642.81px;top:810.64px;font-size:18.5px;color:#555;font-weight:bold;">Aug 7</div>
<div class="t" style="left:450.77px;top:463.99px;font-size:17.5px;color:#555;font-weight:bold;">4</div>
<div class="t" style="left:450.77px;top:543.99px;font-size:17.5px;color:#555;">3</div>
<div class="t" style="left:450.77px;top:623.99px;font-size:17.5px;color:#555;">2</div>
<div class="t" style="left:450.77px;top:703.99px;font-size:17.5px;color:#555;">1</div>
<div class="t" style="left:450.77px;top:783.99px;font-size:17.5px;color:#555;font-weight:bold;">0</div>
<div class="t" style="left:1044.31px;top:842.82px;font-size:19px;color:#555;font-weight:bold;">TIME</div>
<div class="t" style="left:379px;top:633.5px;font-size:17.5px;font-weight:bold;color:#555;transform:translate(-50%,-50%) rotate(-90deg);transform-origin:center;line-height:1;">JOBS</div>
<div style="position:absolute;left:335px;top:915px;width:694px;height:520px;box-sizing:border-box;border:2px solid #b0b0b0;border-radius:6px;background:#fff;"></div>
<div style="position:absolute;left:1061px;top:915px;width:694px;height:520px;box-sizing:border-box;border:2px solid #b0b0b0;border-radius:6px;background:#fff;"></div>
<div class="t" style="left:369.50px;top:950.08px;font-size:21.52px;color:#555;letter-spacing:-0.322px;font-weight:bold;">RECENTLY USED TEMPLATES</div>
<div class="t" style="left:912.30px;top:953.33px;font-size:16.98px;color:#337ab7;letter-spacing:-0.341px;">VIEW ALL</div>
<div style="position:absolute;left:369px;top:1008px;width:626px;height:53.5px;background:#ebebeb;border-radius:6px 6px 0 0;"></div>
<div class="t" style="left:393.50px;top:1025.81px;font-size:21.73px;color:#555;letter-spacing:-0.261px;">NAME</div>
<div class="t" style="left:601.50px;top:1026.33px;font-size:21.11px;color:#555;letter-spacing:-0.572px;">ACTIVITY</div>
<div class="t" style="left:878.00px;top:1025.73px;font-size:21.35px;color:#555;letter-spacing:-0.483px;">ACTIONS</div>
<div class="t" style="left:393.00px;top:1079.23px;font-size:23px;color:#337ab7;letter-spacing:0.286px;">UpdateLinux</div>
<div style="position:absolute;left:605.2px;top:1077px;width:22px;height:22px;box-sizing:border-box;border:2px solid #cfcfcf;background:#f2f2f2;"></div>
<div style="position:absolute;left:605.2px;top:1077px;width:22px;height:11px;background:#5cb85c;"></div>
<div style="position:absolute;left:633px;top:1077px;width:22px;height:22px;box-sizing:border-box;border:2px solid #cfcfcf;background:#f2f2f2;"></div>
<div style="position:absolute;left:633px;top:1088px;width:22px;height:11px;background:#d9534f;"></div>
<div style="position:absolute;left:662px;top:1077px;width:22px;height:22px;box-sizing:border-box;border:2px solid #cfcfcf;background:#f2f2f2;"></div>
<div style="position:absolute;left:662px;top:1088px;width:22px;height:11px;background:#d9534f;"></div>
<div style="position:absolute;left:691px;top:1077px;width:22px;height:22px;box-sizing:border-box;border:2px solid #cfcfcf;background:#f2f2f2;"></div>
<div style="position:absolute;left:691px;top:1088px;width:22px;height:11px;background:#d9534f;"></div>
<div style="position:absolute;left:720px;top:1077px;width:22px;height:22px;box-sizing:border-box;border:2px solid #cfcfcf;background:#f2f2f2;"></div>
<div style="position:absolute;left:720px;top:1088px;width:22px;height:11px;background:#d9534f;"></div>
<div style="position:absolute;left:749px;top:1077px;width:22px;height:22px;box-sizing:border-box;border:2px solid #cfcfcf;background:#f2f2f2;"></div>
<div style="position:absolute;left:777.5px;top:1077px;width:22px;height:22px;box-sizing:border-box;border:2px solid #cfcfcf;background:#f2f2f2;"></div>
<div style="position:absolute;left:806px;top:1077px;width:22px;height:22px;box-sizing:border-box;border:2px solid #cfcfcf;background:#f2f2f2;"></div>
<div style="position:absolute;left:835px;top:1077px;width:22px;height:22px;box-sizing:border-box;border:2px solid #cfcfcf;background:#f2f2f2;"></div>
<div style="position:absolute;left:864px;top:1077px;width:22px;height:22px;box-sizing:border-box;border:2px solid #cfcfcf;background:#f2f2f2;"></div>
<svg style="position:absolute;left:0;top:0" width="1000" height="1120" viewBox="0 0 1000 1120">
<path fill="#646873" d="M960.5,1080.2 C960.2,1086 957.5,1091 951.8,1095.2 C952.6,1099 951,1102.6 947,1106 L947.8,1100.4 C946.5,1101.2 944.8,1101.8 943.3,1101.8 C941.2,1103.4 938.6,1104.1 936.3,1103.7 C936.5,1101 937.6,1098 939.6,1095.6 C938.2,1094.4 936.6,1093.8 934.8,1093.4 C937,1091 940.5,1089.2 946.2,1088.7 C950.2,1084.3 955,1081.2 960.5,1080.2 Z"/>
<path fill="#fff" d="M938.9,1098.9 L939.5,1101.9 L942.6,1101.3 Z"/>
<circle cx="952.6" cy="1088.1" r="2.25" fill="#fff"/>
</svg>
<div class="t" style="left:1095.00px;top:950.18px;font-size:21.41px;color:#555;letter-spacing:-0.401px;font-weight:bold;">RECENT JOB RUNS</div>
<div class="t" style="left:1638.40px;top:953.33px;font-size:16.98px;color:#337ab7;letter-spacing:-0.341px;">VIEW ALL</div>
<div style="position:absolute;left:1095px;top:1008.5px;width:626px;height:53.3px;background:#ebebeb;border-radius:6px 6px 0 0;"></div>
<div class="t" style="left:1118.80px;top:1025.81px;font-size:21.73px;color:#555;letter-spacing:-0.261px;">NAME</div>
<div class="t" style="left:1643.65px;top:1025.58px;font-size:22px;color:#555;">TIME</div>
<svg style="position:absolute;left:0;top:0" width="1778" height="1419" viewBox="0 0 1778 1419"><circle cx="1127.8" cy="1091.2" r="9.3" fill="#5cb85c"/><circle cx="1127.4" cy="1171" r="9.8" fill="#d9534f"/><rect x="1126" y="1164.5" width="2.8" height="8.5" rx="0.6" fill="#fff"/><rect x="1126" y="1174.6" width="2.8" height="2.8" rx="0.6" fill="#fff"/><circle cx="1127.4" cy="1249" r="9.8" fill="#d9534f"/><rect x="1126" y="1242.5" width="2.8" height="8.5" rx="0.6" fill="#fff"/><rect x="1126" y="1252.6" width="2.8" height="2.8" rx="0.6" fill="#fff"/><circle cx="1127.4" cy="1327" r="9.8" fill="#d9534f"/><rect x="1126" y="1320.5" width="2.8" height="8.5" rx="0.6" fill="#fff"/><rect x="1126" y="1330.6" width="2.8" height="2.8" rx="0.6" fill="#fff"/><circle cx="1127.4" cy="1405" r="9.8" fill="#d9534f"/><rect x="1126" y="1398.5" width="2.8" height="8.5" rx="0.6" fill="#fff"/><rect x="1126" y="1408.6" width="2.8" height="2.8" rx="0.6" fill="#fff"/></svg>
<div class="t" style="left:1153.20px;top:1079.03px;font-size:23px;color:#337ab7;letter-spacing:0.226px;">UpdateLinux</div>
<div class="t" style="left:1469.70px;top:1079.13px;font-size:23px;color:#333;letter-spacing:0.076px;">8/7/2019 10:00:35 AM</div>
<div style="position:absolute;left:1095px;top:1131px;width:626px;height:2px;background:#d7d7d7;"></div>
<div class="t" style="left:1147.00px;top:1159.53px;font-size:23px;color:#337ab7;letter-spacing:0.186px;">UpdateLinux</div>
<div class="t" style="left:1482.80px;top:1150.23px;font-size:23px;color:#333;letter-spacing:0.063px;">8/7/2019 9:07:44 AM</div>
<div style="position:absolute;left:1095px;top:1209px;width:626px;height:2px;background:#d7d7d7;"></div>
<div class="t" style="left:1147.00px;top:1237.53px;font-size:23px;color:#337ab7;letter-spacing:0.186px;">UpdateLinux</div>
<div class="t" style="left:1482.80px;top:1228.23px;font-size:23px;color:#333;letter-spacing:0.063px;">8/7/2019 9:06:43 AM</div>
<div style="position:absolute;left:1095px;top:1287px;width:626px;height:2px;background:#d7d7d7;"></div>
<div class="t" style="left:1147.00px;top:1315.53px;font-size:23px;color:#337ab7;letter-spacing:0.186px;">UpdateLinux</div>
<div class="t" style="left:1482.80px;top:1306.23px;font-size:23px;color:#333;letter-spacing:0.063px;">8/7/2019 9:04:15 AM</div>
<div style="position:absolute;left:1095px;top:1365px;width:626px;height:2px;background:#d7d7d7;"></div>
<div class="t" style="left:1147.00px;top:1393.53px;font-size:23px;color:#337ab7;letter-spacing:0.186px;">UpdateLinux</div>
<div class="t" style="left:1482.80px;top:1384.23px;font-size:23px;color:#333;letter-spacing:0.063px;">8/7/2019 9:01:58 AM</div>
</body></html>
